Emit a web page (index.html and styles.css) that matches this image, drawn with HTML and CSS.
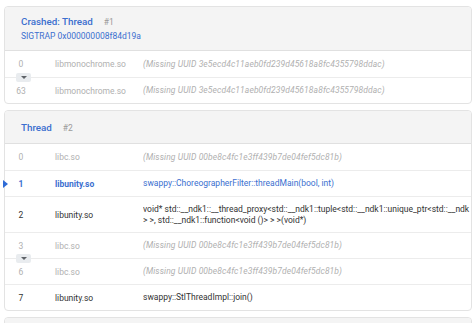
FILE: index.html
```html
<!DOCTYPE html>
<html lang="en">

<head>
    <meta charset="UTF-8">
    <meta name="viewport" content="width=device-width, initial-scale=1.0">
    <title>Stack Trace</title>
    <link rel="stylesheet" href="styles.css">
</head>

<body>
    <div class="thread-card">
        <div class="thread-header thread-header-tall">
            <div class="thread-title">
                <span class="thread-name">Crashed: Thread</span>
                <span class="thread-num">#1</span>
            </div>
            <div class="thread-signal">SIGTRAP 0x000000008f84d19a</div>
        </div>
        <div class="frame frame-missing">
            <span class="frame-index">0</span>
            <span class="frame-lib">libmonochrome.so</span>
            <span class="frame-symbol">(Missing UUID 3e5ecd4c11aeb0fd239d45618a8fc4355798ddac)</span>
        </div>
        <div class="frame frame-missing">
            <button class="expand-btn"><span class="caret"></span></button>
            <span class="frame-index">63</span>
            <span class="frame-lib">libmonochrome.so</span>
            <span class="frame-symbol">(Missing UUID 3e5ecd4c11aeb0fd239d45618a8fc4355798ddac)</span>
        </div>
    </div>

    <div class="thread-card">
        <div class="thread-header">
            <div class="thread-title">
                <span class="thread-name">Thread</span>
                <span class="thread-num">#2</span>
            </div>
        </div>
        <div class="frame frame-missing">
            <span class="frame-index">0</span>
            <span class="frame-lib">libc.so</span>
            <span class="frame-symbol">(Missing UUID 00be8c4fc1e3ff439b7de04fef5dc81b)</span>
        </div>
        <div class="frame frame-active">
            <span class="active-marker"></span>
            <span class="frame-index">1</span>
            <span class="frame-lib">libunity.so</span>
            <span class="frame-symbol">swappy::ChoreographerFilter::threadMain(bool, int)</span>
        </div>
        <div class="frame frame-long">
            <span class="frame-index">2</span>
            <span class="frame-lib">libunity.so</span>
            <span class="frame-symbol">void* std::__ndk1::__thread_proxy&lt;std::__ndk1::tuple&lt;std::__ndk1::unique_ptr&lt;std::__ndk<br>&gt; &gt;, std::__ndk1::function&lt;void ()&gt; &gt; &gt;(void*)</span>
        </div>
        <div class="frame frame-missing">
            <span class="frame-index">3</span>
            <span class="frame-lib">libc.so</span>
            <span class="frame-symbol">(Missing UUID 00be8c4fc1e3ff439b7de04fef5dc81b)</span>
        </div>
        <div class="frame frame-missing">
            <button class="expand-btn"><span class="caret"></span></button>
            <span class="frame-index">6</span>
            <span class="frame-lib">libc.so</span>
            <span class="frame-symbol">(Missing UUID 00be8c4fc1e3ff439b7de04fef5dc81b)</span>
        </div>
        <div class="frame">
            <span class="frame-index">7</span>
            <span class="frame-lib">libunity.so</span>
            <span class="frame-symbol">swappy::StlThreadImpl::join()</span>
        </div>
    </div>

    <div class="thread-card">
        <div class="thread-header"></div>
    </div>
</body>

</html>
```

FILE: styles.css
```css
*,
html,
body {
    margin: 0;
    padding: 0;
    box-sizing: border-box;
}

body {
    font-family: Roboto, "Liberation Sans", sans-serif;
    font-size: 8.5px;
    color: #333333;
    background-color: white;
    padding: 6px 2px 0 4px;
    height: 323px;
    overflow: hidden;
}

.thread-card {
    position: relative;
    border: 1px solid #e3e3e3;
    border-radius: 4px;
    margin-bottom: 6px;
    background-color: white;
}

.thread-header {
    background-color: #f4f4f4;
    border-bottom: 1px solid #e0e0e0;
    border-radius: 4px 4px 0 0;
    height: 33px;
    padding: 0 16px;
    display: flex;
    flex-direction: column;
    justify-content: center;
}

.thread-header-tall {
    height: 44px;
    gap: 4px;
}

.thread-title {
    display: flex;
    align-items: baseline;
    gap: 11px;
}

.thread-name {
    color: #3b6fcf;
    font-weight: 500;
    font-size: 9.8px;
}

.thread-num {
    color: #9a9a9a;
    font-size: 8.5px;
}

.thread-signal {
    color: #3b6fcf;
    font-size: 8.5px;
}

.frame {
    position: relative;
    display: grid;
    grid-template-columns: 32px 70px minmax(0, 1fr);
    column-gap: 18px;
    align-items: center;
    height: 26px;
    border-top: 1px solid #ececec;
    white-space: nowrap;
}

.thread-header + .frame {
    border-top: 0;
}

.frame-index {
    text-align: center;
}

.frame-symbol {
    overflow: hidden;
    line-height: 11px;
}

.frame-missing {
    color: #b0b0b0;
}

.frame-missing .frame-symbol {
    font-style: italic;
    letter-spacing: 0.1px;
}

.frame-active {
    color: #3b6fcf;
}

.frame-active .frame-index,
.frame-active .frame-lib {
    font-weight: 700;
}

.frame-long {
    height: 36px;
}

.active-marker {
    position: absolute;
    left: -2px;
    top: 9px;
    width: 0;
    height: 0;
    border-top: 4px solid transparent;
    border-bottom: 4px solid transparent;
    border-left: 5px solid #2f6bd6;
}

.expand-btn {
    position: absolute;
    left: 11px;
    top: -5px;
    width: 15px;
    height: 9px;
    border: 0;
    border-radius: 2px;
    background-color: #e9ecef;
    display: flex;
    align-items: center;
    justify-content: center;
    cursor: pointer;
}

.caret {
    width: 0;
    height: 0;
    border-left: 3px solid transparent;
    border-right: 3px solid transparent;
    border-top: 3px solid #5f6368;
}
```
